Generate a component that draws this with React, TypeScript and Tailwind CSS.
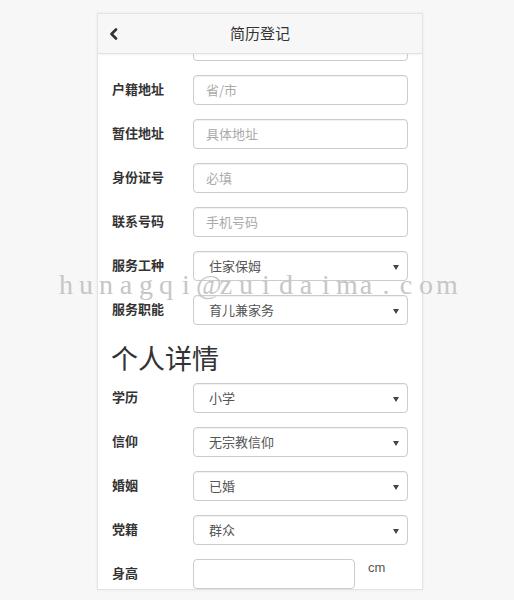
import React from "react";

const FONT = { fontFamily: '"Noto Sans CJK SC", "Noto Sans", sans-serif' };

function Arrow() {
  return (
    <svg width="6" height="5" viewBox="0 0 6 5" className="absolute right-[8px] top-[13px]">
      <path d="M0 0 H6 L3 5 Z" fill="#444" />
    </svg>
  );
}

function Row({
  label,
  placeholder,
  value,
  select,
  mb = true,
}: {
  label: string;
  placeholder?: string;
  value?: string;
  select?: boolean;
  mb?: boolean;
}) {
  return (
    <div className={`flex items-center h-[30px] ${mb ? "mb-[14px]" : ""}`}>
      <div className="w-[81px] shrink-0 text-[13px] font-bold text-[#333] mt-[-3px]">{label}</div>
      <div className="relative w-[215px] h-[30px] rounded-[4px] border border-[#ccc] bg-white shadow-[inset_0_1px_1px_rgba(0,0,0,0.06)] flex items-center">
        {select ? (
          <>
            <span className="pl-[15px] text-[13px] text-[#555]">{value}</span>
            <Arrow />
          </>
        ) : (
          <span className="pl-[12px] text-[13px] text-[#aaa]">{placeholder}</span>
        )}
      </div>
    </div>
  );
}

const WATERMARK = "hunagqi@zuidaima.com";

export default function App() {
  return (
    <div className="relative w-full h-[600px] bg-[#f7f7f7] overflow-hidden" style={FONT}>
      <div className="ml-[97px] mt-[13px] w-[326px] h-[577px] bg-white border border-[#e3e3e3] shadow-[0_0_3px_rgba(0,0,0,0.06)] flex flex-col overflow-hidden">
        <div className="relative h-[40px] shrink-0 bg-[#f7f7f7] border-b border-[#e2e2e2] flex items-center justify-center shadow-[0_1px_2px_rgba(0,0,0,0.05)] z-10">
          <svg width="9" height="12" viewBox="0 0 9 12" className="absolute left-[11px] top-[14px]">
            <path d="M7 1.5 L2.5 6 L7 10.5" stroke="#333" strokeWidth="2.6" fill="none" strokeLinecap="round" strokeLinejoin="round" />
          </svg>
          <span className="text-[15px] text-[#333]">简历登记</span>
        </div>
        <div className="flex-1 overflow-hidden pl-[14px]">
          <div className="mt-[-23px]">
            <Row label="" placeholder="" />
            <Row label="户籍地址" placeholder="省/市" />
            <Row label="暂住地址" placeholder="具体地址" />
            <Row label="身份证号" placeholder="必填" />
            <Row label="联系号码" placeholder="手机号码" />
            <Row label="服务工种" value="住家保姆" select />
            <Row label="服务职能" value="育儿兼家务" select mb={false} />
            <div className="mt-[15px] mb-[7px] h-[36px] leading-[36px] text-[27px] text-[#333] ml-[-1px]">个人详情</div>
            <Row label="学历" value="小学" select />
            <Row label="信仰" value="无宗教信仰" select />
            <Row label="婚姻" value="已婚" select />
            <Row label="党籍" value="群众" select />
            <div className="flex items-center h-[30px]">
              <div className="w-[81px] shrink-0 text-[13px] font-bold text-[#333] mt-[-2px]">身高</div>
              <div className="w-[162px] h-[30px] rounded-[4px] border border-[#ccc] bg-white" />
              <div className="ml-[13px] self-start mt-[-1px] text-[13px] text-[#555]" style={{ fontFamily: '"Liberation Sans", sans-serif' }}>cm</div>
            </div>
          </div>
        </div>
      </div>
      <div
        className="absolute left-[56px] top-[271px] flex leading-none text-[28px] text-[#c6c6c6] pointer-events-none"
        style={{ fontFamily: '"Liberation Serif", serif' }}
      >
        {WATERMARK.split("").map((c, i) => (
          <span key={i} className="inline-block w-[20px] text-center">
            {c}
          </span>
        ))}
      </div>
    </div>
  );
}
